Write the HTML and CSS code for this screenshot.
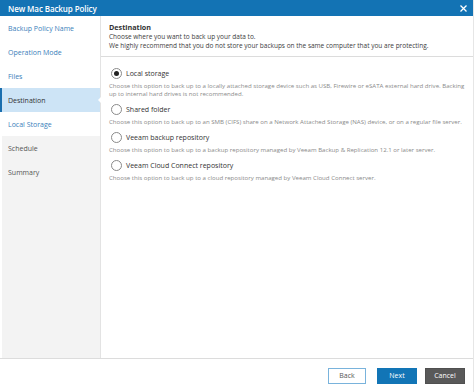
FILE: index.html
```html
<!DOCTYPE html>
<html>
<head>
<meta charset="utf-8">
<link rel="stylesheet" href="styles.css">
</head>
<body>
<div class="dialog">
  <div class="titlebar">
    <span class="title">New Mac Backup Policy</span>
    <svg class="close" width="7" height="7" viewBox="0 0 7 7"><path d="M0.5 0.5L6.5 6.5M6.5 0.5L0.5 6.5" stroke="#fff" stroke-width="1.3"/></svg>
  </div>
  <div class="main">
    <nav class="nav">
      <div class="item done">Backup Policy Name</div>
      <div class="item done">Operation Mode</div>
      <div class="item done">Files</div>
      <div class="item active">Destination</div>
      <div class="item done">Local Storage</div>
      <div class="item">Schedule</div>
      <div class="item">Summary</div>
    </nav>
    <section class="content">
      <header class="head">
        <div class="h">Destination</div>
        <div class="sub">Choose where you want to back up your data to.<br>We highly recommend that you do not store your backups on the same computer that you are protecting.</div>
      </header>
      <div class="options">
        <div class="opt">
          <div class="opt-row"><span class="radio checked"></span><span class="lbl">Local storage</span></div>
          <div class="desc">Choose this option to back up to a locally attached storage device such as USB, Firewire or eSATA external hard drive. Backing<br>up to internal hard drives is not recommended.</div>
        </div>
        <div class="opt">
          <div class="opt-row"><span class="radio"></span><span class="lbl">Shared folder</span></div>
          <div class="desc">Choose this option to back up to an SMB (CIFS) share on a Network Attached Storage (NAS) device, or on a regular file server.</div>
        </div>
        <div class="opt">
          <div class="opt-row"><span class="radio"></span><span class="lbl">Veeam backup repository</span></div>
          <div class="desc">Choose this option to back up to a backup repository managed by Veeam Backup &amp; Replication 12.1 or later server.</div>
        </div>
        <div class="opt">
          <div class="opt-row"><span class="radio"></span><span class="lbl">Veeam Cloud Connect repository</span></div>
          <div class="desc">Choose this option to back up to a cloud repository managed by Veeam Cloud Connect server.</div>
        </div>
      </div>
    </section>
  </div>
  <footer class="footer">
    <button class="btn back">Back</button>
    <button class="btn next">Next</button>
    <button class="btn cancel">Cancel</button>
  </footer>
</div>
</body>
</html>
```
FILE: styles.css
```css
* { box-sizing: border-box; }
html, body { margin: 0; padding: 0; background: #fff; }
body { font-family: "Open Sans", "DejaVu Sans", sans-serif; color: #444; }
.dialog { width: 474px; height: 392px; display: flex; flex-direction: column; border-right: 1px solid #e6e6e6; }
.titlebar { height: 16px; background: #1373b4; display: flex; align-items: center; justify-content: space-between; padding: 0 6px 0 8px; }
.title { color: #fff; font-size: 8px; font-weight: 600; letter-spacing: -0.1px; }
.main { height: 342px; display: flex; }
.nav { width: 101px; background: #f3f3f3; border-right: 1px solid #e3e3e3; border-left: 2px solid #fff; display: flex; flex-direction: column; }
.item { height: 24px; display: flex; align-items: center; padding-left: 6px; font-size: 7px; color: #555; position: relative; }
.item.done { background: #fff; color: #3a80ba; margin-left: -2px; padding-left: 8px; }
.item.active { background: #cde4f6; color: #333; border-left: 2px solid #1a6eae; margin-left: -2px; padding-left: 6px; }
.item.active::after { content: ""; position: absolute; right: -1px; top: 9px; border-style: solid; border-width: 3px 3px 3px 0; border-color: transparent #fff transparent transparent; }
.content { flex: 1; display: flex; flex-direction: column; }
.head { height: 41px; border-bottom: 1px solid #dcdcdc; padding: 6px 0 0 8px; }
.h { font-size: 7.2px; font-weight: 700; color: #333; line-height: 10px; margin-bottom: 1px; }
.sub { font-size: 6.5px; line-height: 8.5px; color: #3c3c3c; }
.options { padding: 9px 4px 0 8px; display: flex; flex-direction: column; gap: 4px; }
.opt { display: flex; flex-direction: column; }
.opt-row { display: flex; align-items: center; height: 15px; }
.radio { width: 11px; height: 11px; border: 1px solid #8a8a8a; border-radius: 50%; margin: 0 4px 0 2px; display: flex; align-items: center; justify-content: center; background: #fff; }
.radio.checked::after { content: ""; width: 5px; height: 5px; border-radius: 50%; background: #222; }
.lbl { font-size: 7px; color: #333; }
.desc { font-size: 6.1px; line-height: 8px; color: #8a8a8a; margin-top: 1px; white-space: nowrap; }
.footer { height: 34px; border-top: 1px solid #dcdcdc; display: flex; align-items: center; justify-content: flex-end; padding: 0 8px 0 0; }
.btn { font-family: "Open Sans", "DejaVu Sans", sans-serif; font-size: 7px; width: 40px; height: 16px; padding: 0; border: 1px solid transparent; }
.back { background: #fff; border-color: #79b3dc; color: #555; width: 38px; margin-right: 11px; }
.next { background: #1275b6; color: #fff; margin-right: 8px; }
.cancel { background: #595959; color: #fff; border-color: #505050; }
```
